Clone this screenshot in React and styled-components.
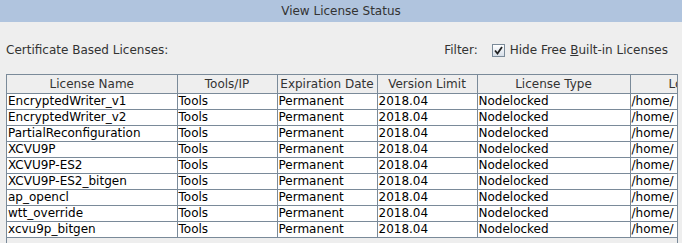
import React from 'react';
import styled, { createGlobalStyle } from 'styled-components';

const Global = createGlobalStyle`
  html, body {
    margin: 0;
    padding: 0;
    background: #eeeeee;
    font-family: "DejaVu Sans", "Liberation Sans", sans-serif;
    font-size: 12px;
    overflow: hidden;
  }
`;

const Window = styled.div`
  width: 682px;
  height: 243px;
  display: flex;
  flex-direction: column;
  background: #eeeeee;
  overflow: hidden;
`;

const TitleBar = styled.div`
  height: 22px;
  flex: none;
  background: #b0c4de;
  color: #333333;
  display: flex;
  align-items: center;
  justify-content: center;
`;

const Toolbar = styled.div`
  height: 20px;
  margin-top: 18px;
  padding: 0 14px 0 6px;
  display: flex;
  align-items: center;
  justify-content: space-between;
  color: #333333;
`;

const FilterGroup = styled.div`
  display: flex;
  align-items: center;
`;

const FilterLabel = styled.span`
  margin-right: 14px;
`;

const Box = styled.span`
  width: 11px;
  height: 11px;
  border: 1px solid #7a8a99;
  background: linear-gradient(#ffffff, #d6dee8);
  display: inline-flex;
  align-items: center;
  justify-content: center;
  margin-right: 5px;
`;

const Mnemonic = styled.span`
  text-decoration: underline;
`;

const ScrollPane = styled.div`
  margin: 14px 4px 0 6px;
  flex: 1;
  border-left: 1px solid #7a8a99;
  border-top: 1px solid #7a8a99;
  border-right: 1px solid #7a8a99;
  overflow: hidden;
  background: #eeeeee;
`;

const Table = styled.table`
  border-collapse: collapse;
  table-layout: fixed;
  width: 751px;
`;

const Th = styled.th`
  height: 18px;
  padding: 0;
  font-weight: normal;
  color: #333333;
  text-align: center;
  background: #eeeeee;
  border-right: 1px solid #7a8a99;
  border-bottom: 1px solid #7a8a99;
  white-space: nowrap;
  overflow: hidden;
`;

const Td = styled.td`
  height: 15px;
  padding: 0 0 0 1px;
  color: #000000;
  background: #ffffff;
  border-right: 1px solid #7a8a99;
  border-bottom: 1px solid #7a8a99;
  white-space: nowrap;
  overflow: hidden;
  line-height: 15px;
`;

const columns = [
  { name: 'License Name', width: 170 },
  { name: 'Tools/IP', width: 100 },
  { name: 'Expiration Date', width: 100 },
  { name: 'Version Limit', width: 100 },
  { name: 'License Type', width: 153 },
  { name: 'Location', width: 128 },
];

const names = [
  'EncryptedWriter_v1',
  'EncryptedWriter_v2',
  'PartialReconfiguration',
  'XCVU9P',
  'XCVU9P-ES2',
  'XCVU9P-ES2_bitgen',
  'ap_opencl',
  'wtt_override',
  'xcvu9p_bitgen',
];

export default function App() {
  return (
    <Window>
      <Global />
      <TitleBar>View License Status</TitleBar>
      <Toolbar>
        <span>Certificate Based Licenses:</span>
        <FilterGroup>
          <FilterLabel>Filter:</FilterLabel>
          <Box>
            <svg width="9" height="9" viewBox="0 0 9 9">
              <path d="M1 4.5 L3.5 7.5 L8 1" stroke="#222" strokeWidth="1.8" fill="none" />
            </svg>
          </Box>
          <span>Hide Free <Mnemonic>B</Mnemonic>uilt-in Licenses</span>
        </FilterGroup>
      </Toolbar>
      <ScrollPane>
        <Table>
          <colgroup>
            {columns.map((c) => <col key={c.name} style={{ width: c.width }} />)}
          </colgroup>
          <thead>
            <tr>
              {columns.map((c) => <Th key={c.name}>{c.name}</Th>)}
            </tr>
          </thead>
          <tbody>
            {names.map((n) => (
              <tr key={n}>
                <Td>{n}</Td>
                <Td>Tools</Td>
                <Td>Permanent</Td>
                <Td>2018.04</Td>
                <Td>Nodelocked</Td>
                <Td>/home/</Td>
              </tr>
            ))}
          </tbody>
        </Table>
      </ScrollPane>
    </Window>
  );
}
